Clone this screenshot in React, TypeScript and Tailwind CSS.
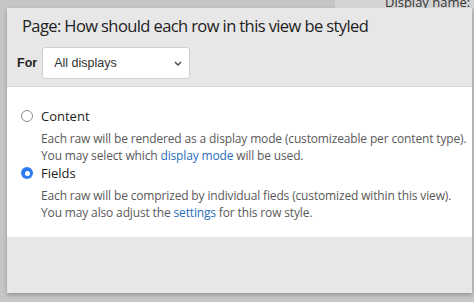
export default function App() {
  return (
    <div className="w-[474px] h-[302px] bg-[#c6c6c6] overflow-hidden relative font-['Open_Sans',sans-serif]">
      {/* page behind the dialog */}
      <div className="h-2 flex">
        <div className="w-[335px]" />
        <div className="flex-1 bg-[#d3d3d3] overflow-hidden">
          <div className="-mt-[5px] pl-[50px] text-[13px] leading-[14px] text-[#333] whitespace-nowrap">
            Display name: <span className="text-[#2a6ebb]">Page</span>
          </div>
        </div>
      </div>

      <div className="ml-[7px] w-[465px] h-[285px] flex flex-col shadow-[0_2px_4px_rgba(0,0,0,0.25)]">
        <Header />
        <Body />
        <div className="flex-1 bg-[#e8e7e7]" />
      </div>
    </div>
  );
}

function Header() {
  return (
    <div className="bg-[#e8e7e7] h-[79px] border-b border-[#d8d8d8] px-[15px] pt-[6px]">
      <h1 className="text-[16.5px] leading-[24px] text-[#222] tracking-[-0.6px] whitespace-nowrap">
        Page: How should each row in this view be styled
      </h1>
      <div className="flex items-center gap-[5px] mt-[9px] -ml-[5px]">
        <span className="font-['Liberation_Sans',sans-serif] font-bold text-[12.5px] text-[#222]">For</span>
        <div className="w-[148px] h-[32px] bg-white border border-[#d0d0d0] rounded-[3px] flex items-center justify-between pl-[11px] pr-[7px]">
          <span className="font-['Liberation_Sans',sans-serif] text-[12.5px] text-[#333]">All displays</span>
          <svg width="8" height="5" viewBox="0 0 8 5" fill="none">
            <path d="M1 1l3 3l3-3" stroke="#444" strokeWidth="1.4" />
          </svg>
        </div>
      </div>
    </div>
  );
}

function Radio({ checked }: { checked?: boolean }) {
  if (checked) {
    return (
      <span className="w-[12px] h-[12px] rounded-full bg-[#2f7bf5] flex items-center justify-center">
        <span className="w-[5px] h-[5px] rounded-full bg-white" />
      </span>
    );
  }
  return <span className="w-[12px] h-[12px] rounded-full border border-[#8a8a8a] bg-white" />;
}

function Option({
  label,
  checked,
  children,
}: {
  label: string;
  checked?: boolean;
  children: React.ReactNode;
}) {
  return (
    <div>
      <div className="flex items-center gap-[8px]">
        <Radio checked={checked} />
        <span className="text-[13px] leading-[18px] text-[#222]">{label}</span>
      </div>
      <p className="pl-[20px] mt-[5px] text-[12px] leading-[17px] tracking-[-0.15px] text-[#595959] whitespace-nowrap">
        {children}
      </p>
    </div>
  );
}

function Body() {
  return (
    <div className="bg-white h-[150px] pl-[14px] pt-[20px] flex flex-col">
      <Option label="Content">
        Each raw will be rendered as a display mode (customizeable per content type).
        <br />
        You may select which <span className="text-[#2a6ebb]">display mode</span> will be used.
      </Option>
      <Option label="Fields" checked>
        Each raw will be comprized by individual fieds (customized within this view).
        <br />
        You may also adjust the <span className="text-[#2a6ebb]">settings</span> for this row style.
      </Option>
    </div>
  );
}
